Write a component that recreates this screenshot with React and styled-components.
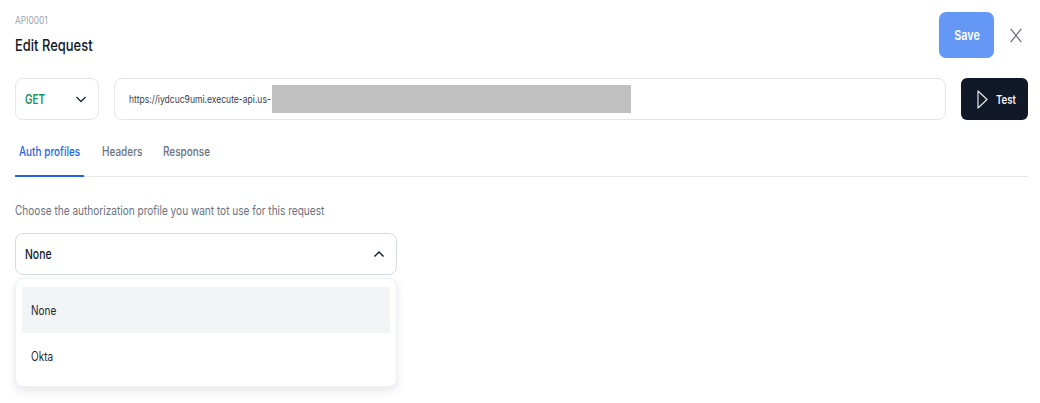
import React from "react";
import styled, { createGlobalStyle } from "styled-components";

const GlobalStyle = createGlobalStyle`
  html, body {
    margin: 0;
    background: #fff;
    font-family: "Inter", "Liberation Sans", sans-serif;
  }
  * { box-sizing: border-box; }
`;

const Chevron = ({ up }) => (
  <svg width="14" height="14" viewBox="0 0 14 14" fill="none" stroke={up ? "#111827" : "#1f2937"} strokeWidth="1.4">
    <path d={up ? "M2.5 9.5 7 5l4.5 4.5" : "M2.5 5 7 9.5 11.5 5"} />
  </svg>
);

const App = () => {
  return (
    <Page>
      <GlobalStyle />
      <Header>
        <div>
          <Code><Narrow>API0001</Narrow></Code>
          <Title><Narrow>Edit Request</Narrow></Title>
        </div>
        <HeaderActions>
          <SaveButton><Narrow $center>Save</Narrow></SaveButton>
          <CloseIcon width="12" height="15" viewBox="0 0 12 15" fill="none" stroke="#6b7280" strokeWidth="1.3">
            <path d="M.7 .8l10.6 13.4M11.3 .8 .7 14.2" />
          </CloseIcon>
        </HeaderActions>
      </Header>

      <RequestRow>
        <MethodSelect>
          <Method><Narrow>GET</Narrow></Method>
          <Chevron />
        </MethodSelect>
        <UrlField>
          <UrlText><Narrow>https://iydcuc9umi.execute-api.us-</Narrow></UrlText>
          <Redacted />
        </UrlField>
        <TestButton>
          <svg width="11" height="19" viewBox="0 0 11 19" fill="none" stroke="#e5e7eb" strokeWidth="1.2" strokeLinejoin="round">
            <path d="M1 1v17L10 9.5z" />
          </svg>
          <Narrow>Test</Narrow>
        </TestButton>
      </RequestRow>

      <TabBar>
        <TabItem $active $width={69}><Narrow>Auth profiles</Narrow></TabItem>
        <TabItem $width={46}><Narrow>Headers</Narrow></TabItem>
        <TabItem $width={53}><Narrow>Response</Narrow></TabItem>
      </TabBar>

      <Hint><Narrow>Choose the authorization profile you want tot use for this request</Narrow></Hint>

      <ProfileSelect>
        <ProfileValue><Narrow>None</Narrow></ProfileValue>
        <Chevron up />
      </ProfileSelect>
      <Menu>
        <MenuItem $selected><Narrow>None</Narrow></MenuItem>
        <MenuItem><Narrow>Okta</Narrow></MenuItem>
      </Menu>
    </Page>
  );
};

export default App;

// the whole reference is squeezed sideways, so its text runs narrow
const Narrow = styled.span`
  display: inline-block;
  white-space: nowrap;
  transform: scaleX(0.8);
  transform-origin: ${({ $center }) => ($center ? "center" : "left")} center;
`;

const Page = styled.div`
  width: 1040px;
  height: 403px;
  overflow: hidden;
  padding: 12px 12px 0 15px;
`;

const Header = styled.div`
  display: flex;
  justify-content: space-between;
  height: 46px;
`;

const Code = styled.div`
  margin-top: 3px;
  font-size: 10.5px;
  line-height: 12px;
  color: #9ca3af;
`;

const Title = styled.div`
  margin-top: 8px;
  font-size: 16.2px;
  line-height: 20px;
  font-weight: 500;
  color: #111827;
`;

const HeaderActions = styled.div`
  display: flex;
  align-items: center;
  gap: 16px;
`;

const SaveButton = styled.button`
  width: 55px;
  height: 46px;
  border: 0;
  border-radius: 7px;
  padding: 0;
  background: #6497f6;
  color: #fff;
  font: 600 13.5px "Inter", sans-serif;
`;

const CloseIcon = styled.svg`
  margin-right: 6px;
`;

const RequestRow = styled.div`
  display: flex;
  gap: 15px;
  margin-top: 20px;
  height: 42px;
`;

const MethodSelect = styled.div`
  display: flex;
  align-items: center;
  justify-content: space-between;
  width: 84px;
  padding: 0 10px 0 9px;
  border: 1px solid #e2e5eb;
  border-radius: 8px;
`;

const Method = styled.span`
  font-size: 12.5px;
  font-weight: 600;
  color: #16935f;
`;

const UrlField = styled.div`
  flex: 1;
  display: flex;
  align-items: center;
  padding-left: 14px;
  border: 1px solid #e2e5eb;
  border-radius: 8px;
`;

const UrlText = styled.span`
  width: 143px;
  font-size: 10.7px;
  color: #374151;
`;

const Redacted = styled.div`
  width: 359px;
  height: 28px;
  background: #c0c0c0;
`;

const TestButton = styled.button`
  display: flex;
  align-items: center;
  gap: 8px;
  width: 67px;
  border: 0;
  border-radius: 6px;
  padding: 0 0 0 16px;
  background: #111827;
  color: #f3f4f6;
  font: 600 12px "Inter", sans-serif;
`;

const TabBar = styled.div`
  display: flex;
  gap: 15px;
  height: 57px;
  border-bottom: 1px solid #e5e7eb;
`;

const TabItem = styled.div`
  width: ${({ $width }) => $width}px;
  height: 57px;
  padding: 24px 0 0 ${({ $active }) => ($active ? "4px" : "3px")};
  font-size: 12.5px;
  line-height: 16px;
  font-weight: 500;
  color: ${({ $active }) => ($active ? "#2563eb" : "#6b7280")};
  border-bottom: ${({ $active }) => ($active ? "2px solid #2563eb" : "0")};
`;

const Hint = styled.div`
  margin-top: 26px;
  font-size: 12.6px;
  line-height: 16px;
  color: #6b7280;
`;

const ProfileSelect = styled.div`
  display: flex;
  align-items: center;
  justify-content: space-between;
  width: 382px;
  height: 42px;
  margin-top: 14px;
  padding: 0 10px 0 9px;
  border: 1px solid #d5d9e2;
  border-radius: 8px;
`;

const ProfileValue = styled.span`
  font-size: 13px;
  font-weight: 500;
  color: #111827;
`;

const Menu = styled.div`
  width: 382px;
  height: 109px;
  margin-top: 3px;
  padding: 8px 6px 0;
  border-radius: 8px;
  border: 1px solid #f0f1f4;
  background: #fff;
  box-shadow: 0 4px 10px rgba(17, 24, 39, 0.1);
`;

const MenuItem = styled.div`
  display: flex;
  align-items: center;
  height: 46px;
  padding-left: 9px;
  font-size: 12.5px;
  color: #1f2937;
  background: ${({ $selected }) => ($selected ? "#f3f4f6" : "transparent")};
`;
